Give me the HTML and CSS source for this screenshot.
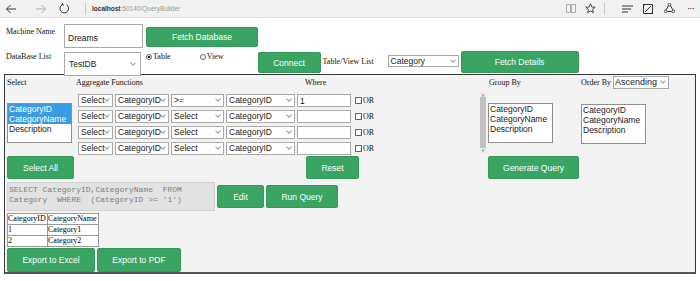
FILE: index.html
```html
<!DOCTYPE html>
<html lang="en">
<head>
    <meta charset="UTF-8">
    <title>QueryBuilder</title>
    <link rel="stylesheet" href="styles.css">
</head>
<body>
    <!-- browser toolbar -->
    <div class="browser">
        <div class="nav">
            <svg class="ico back" width="12" height="10" viewBox="0 0 12 10"><path d="M11 5H1.5M5.5 1L1.5 5l4 4" fill="none" stroke="#333" stroke-width="1"/></svg>
            <svg class="ico fwd" width="12" height="10" viewBox="0 0 12 10"><path d="M1 5h9.5M6.5 1l4 4-4 4" fill="none" stroke="#aaa" stroke-width="1"/></svg>
            <svg class="ico refresh" width="11" height="11" viewBox="0 0 11 11"><path d="M7.5 1.8A4.3 4.3 0 1 1 3.3 1.7" fill="none" stroke="#333" stroke-width="1"/><path d="M3.3 1.7L3.6 0M3.3 1.7L5 2.2" fill="none" stroke="#333" stroke-width="1"/></svg>
            <span class="sep"></span>
            <span class="url"><b>localhost</b>:50140/QueryBuilder</span>
        </div>
        <div class="tools">
            <svg class="ico book" width="10" height="9" viewBox="0 0 10 9"><path d="M.5 .5h4v8h-4zM5.5 .5h4v8h-4z" fill="none" stroke="#aaa"/></svg>
            <svg class="ico star" width="11" height="11" viewBox="0 0 11 11"><path d="M5.5 .8l1.3 3.2 3.4.2-2.6 2.2.8 3.3-2.9-1.8-2.9 1.8.8-3.3L.8 4.2l3.4-.2z" fill="none" stroke="#333" stroke-width=".9"/></svg>
            <span class="sep"></span>
            <svg class="ico hub" width="11" height="8" viewBox="0 0 11 8"><path d="M0 1h11M0 4h9M0 7h6" stroke="#333"/></svg>
            <svg class="ico note" width="10" height="10" viewBox="0 0 10 10"><path d="M.5 .5h9v9h-9z" fill="none" stroke="#333"/><path d="M2 8L8 2" stroke="#333"/><circle cx=".8" cy=".8" r=".9" fill="#333"/><circle cx="9.2" cy="9.2" r=".9" fill="#333"/></svg>
            <svg class="ico share" width="11" height="11" viewBox="0 0 11 11"><path d="M5.5 1L9.8 8.5H1.2z" fill="none" stroke="#333" stroke-linejoin="round"/><circle cx="5.5" cy="1.6" r="1.4" fill="#f2f2f2" stroke="#333" stroke-width=".8"/><circle cx="9.3" cy="8.3" r="1.4" fill="#f2f2f2" stroke="#333" stroke-width=".8"/><circle cx="1.7" cy="8.3" r="1.4" fill="#f2f2f2" stroke="#333" stroke-width=".8"/></svg>
            <span class="more">&middot;&middot;&middot;</span>
        </div>
    </div>

    <!-- connection form -->
    <div class="top">
        <div class="row row1">
            <label class="lbl lbl-machine">Machine Name</label>
            <input class="text machine" type="text" value="Dreams">
            <button class="btn fetch-db">Fetch Database</button>
        </div>
        <div class="row row2">
            <label class="lbl lbl-db">DataBase List</label>
            <span class="sel sel-db">TestDB</span>
            <span class="radio radio-table"><span class="dot on"></span>Table</span>
            <span class="radio radio-view"><span class="dot"></span>View</span>
            <button class="btn connect">Connect</button>
            <label class="lbl lbl-table">Table/View List</label>
            <span class="sel sel-table">Category</span>
            <button class="btn fetch-details">Fetch Details</button>
        </div>
    </div>

    <!-- query builder -->
    <div class="panel">
        <div class="qb-top">
            <div class="col col-select">
                <div class="head">Select</div>
                <div class="listbox">
                    <div class="opt picked">CategoryID</div>
                    <div class="opt picked">CategoryName</div>
                    <div class="opt">Description</div>
                </div>
            </div>

            <div class="col col-agg">
                <div class="head agg-head">
                    <span>Aggregate Functions</span>
                    <span class="where">Where</span>
                </div>
                <div class="agg-row">
                    <span class="sel s1">Select</span>
                    <span class="sel s2">CategoryID</span>
                    <span class="sel s3">&gt;=</span>
                    <span class="sel s4">CategoryID</span>
                    <input class="text cond" type="text" value="1">
                    <span class="check"></span><span class="or">OR</span>
                </div>
                <div class="agg-row">
                    <span class="sel s1">Select</span>
                    <span class="sel s2">CategoryID</span>
                    <span class="sel s3">Select</span>
                    <span class="sel s4">CategoryID</span>
                    <input class="text cond" type="text" value="">
                    <span class="check"></span><span class="or">OR</span>
                </div>
                <div class="agg-row">
                    <span class="sel s1">Select</span>
                    <span class="sel s2">CategoryID</span>
                    <span class="sel s3">Select</span>
                    <span class="sel s4">CategoryID</span>
                    <input class="text cond" type="text" value="">
                    <span class="check"></span><span class="or">OR</span>
                </div>
                <div class="agg-row">
                    <span class="sel s1">Select</span>
                    <span class="sel s2">CategoryID</span>
                    <span class="sel s3">Select</span>
                    <span class="sel s4">CategoryID</span>
                    <input class="text cond" type="text" value="">
                    <span class="check"></span><span class="or">OR</span>
                </div>
            </div>

            <div class="col col-group">
                <div class="head group-head">Group By</div>
                <div class="group-body">
                    <div class="scrollbar"><span class="arrow">&#9650;</span><span class="thumb"></span><span class="arrow">&#9660;</span></div>
                    <div class="listbox">
                        <div class="opt">CategoryID</div>
                        <div class="opt">CategoryName</div>
                        <div class="opt">Description</div>
                    </div>
                </div>
            </div>

            <div class="col col-order">
                <div class="head order-head">Order By <span class="sel sel-order">Ascending</span></div>
                <div class="listbox">
                    <div class="opt">CategoryID</div>
                    <div class="opt">CategoryName</div>
                    <div class="opt">Description</div>
                </div>
            </div>
        </div>

        <div class="btn-row">
            <button class="btn select-all">Select All</button>
            <button class="btn reset">Reset</button>
            <button class="btn generate">Generate Query</button>
        </div>

        <div class="query-row">
            <div class="query">SELECT CategoryID,CategoryName  FROM<br>Category  WHERE  (CategoryID &gt;= '1')</div>
            <button class="btn edit">Edit</button>
            <button class="btn run">Run Query</button>
        </div>

        <table class="result">
            <tr><td class="c1">CategoryID</td><td class="c2">CategoryName</td></tr>
            <tr><td>1</td><td>Category1</td></tr>
            <tr><td>2</td><td>Category2</td></tr>
        </table>

        <div class="export-row">
            <button class="btn excel">Export to Excel</button>
            <button class="btn pdf">Export to PDF</button>
        </div>
    </div>
</body>
</html>
```

FILE: styles.css
```css
body {
    margin: 0;
    font-family: "Liberation Serif", serif;
    font-size: 8px;
    color: #111;
    background: #fff;
}

/* browser bar */
.browser {
    height: 17px;
    background: #f2f2f2;
    border-bottom: 1px solid #dedede;
    display: flex;
    align-items: center;
    justify-content: space-between;
}
.nav, .tools {
    display: flex;
    align-items: center;
}
.ico { display: block; }
.back { margin-left: 5px; }
.fwd { margin-left: 18px; }
.refresh { margin-left: 12px; }
.sep {
    width: 1px;
    height: 12px;
    background: #c8c8c8;
}
.nav .sep { margin-left: 15px; }
.url {
    margin-left: 6px;
    font-family: "Liberation Sans", sans-serif;
    font-size: 6.5px;
    color: #999;
}
.url b { color: #333; font-weight: bold; }
.tools { margin-right: 6px; }
.book { margin-right: 9px; }
.star { margin-right: 8px; }
.tools .sep { margin-right: 17px; }
.hub { margin-right: 10px; }
.note { margin-right: 11px; }
.share { margin-right: 12px; }
.more {
    font-family: "Liberation Sans", sans-serif;
    font-size: 10px;
    color: #333;
    letter-spacing: -1px;
}

/* connection form */
.top { padding: 6px 0 0 6px; }
.row {
    display: flex;
    align-items: flex-start;
}
.row1 { height: 26px; }
.row2 { height: 24px; }
.lbl {
    line-height: 10px;
    white-space: nowrap;
}
.lbl-machine { width: 58px; padding-top: 3px; }
.lbl-db { width: 58px; padding-top: 2px; }
.lbl-table { width: 65px; margin-left: 2px; padding-top: 7px; }

.text {
    box-sizing: border-box;
    margin: 0;
    border: 1px solid #a9a9a9;
    background: #fff;
    font-family: "Liberation Sans", sans-serif;
    font-size: 8.5px;
    color: #111;
    padding: 0 3px;
}
.machine { width: 79px; height: 24px; padding-top: 3px; }

.sel {
    box-sizing: border-box;
    position: relative;
    display: inline-block;
    height: 13px;
    line-height: 11px;
    border: 1px solid #a9a9a9;
    background: #fff;
    font-family: "Liberation Sans", sans-serif;
    font-size: 8.5px;
    color: #222;
    padding-left: 2px;
    white-space: nowrap;
    overflow: hidden;
}
.sel::after {
    content: "";
    position: absolute;
    right: 3px;
    top: 2px;
    width: 3px;
    height: 3px;
    border-right: 1px solid #9a9a9a;
    border-bottom: 1px solid #9a9a9a;
    transform: rotate(45deg);
}
.sel-db {
    width: 77px;
    height: 24px;
    line-height: 22px;
    margin-top: 2px;
    padding-left: 4px;
}
.sel-db::after { top: 8px; right: 5px; }
.sel-table { width: 71px; height: 12px; line-height: 10px; margin-top: 5px; }
.sel-table::after { top: 2px; }

.radio {
    display: flex;
    align-items: center;
    line-height: 10px;
    font-size: 8px;
}
.dot {
    box-sizing: border-box;
    width: 6px;
    height: 6px;
    border: 1px solid #666;
    border-radius: 50%;
    margin-right: 1px;
    background: #fff;
}
.dot.on { background: radial-gradient(circle, #222 1.3px, #fff 1.6px); }
.radio-table { margin-left: 5px; padding-top: 2px; }
.radio-view { margin-left: 29px; padding-top: 2px; }

.btn {
    box-sizing: border-box;
    margin: 0;
    padding: 0;
    border: 1px solid #34995b;
    border-radius: 2px;
    background-color: #3aa563;
    color: #fff;
    font-family: "Liberation Sans", sans-serif;
    font-size: 8.5px;
    cursor: pointer;
}
.fetch-db { width: 112px; height: 20px; margin: 3px 0 0 3px; }
.connect { width: 63px; height: 21px; margin: 2px 0 0 34px; }
.fetch-details { width: 118px; height: 22px; margin: 1px 0 0 2px; }

/* query builder panel */
.panel {
    box-sizing: border-box;
    margin-left: 4px;
    width: 692px;
    height: 200px;
    border: 1px solid #3a3a3a;
    border-bottom: 2px solid #555;
    background: #f3f3f3;
}
.qb-top {
    display: flex;
    height: 80px;
}
.head {
    line-height: 10px;
    padding-top: 3px;
    white-space: nowrap;
}
.col-select { margin-left: 2px; width: 64px; }
.listbox {
    box-sizing: border-box;
    width: 65px;
    height: 40px;
    border: 1px solid #8f8f8f;
    background: #fff;
    font-family: "Liberation Sans", sans-serif;
    font-size: 8.5px;
    line-height: 10px;
    color: #222;
}
.opt { padding-left: 1px; white-space: nowrap; }
.opt.picked { background: #3a9be3; color: #fff; }
.col-select .listbox { margin-top: 15px; }

.col-agg { margin-left: 5px; width: 404px; }
.agg-head { display: flex; }
.where { margin-left: 162px; }
.agg-row {
    display: flex;
    align-items: center;
    gap: 2px;
    margin-left: 2px;
    height: 13px;
    margin-top: 3px;
}
.agg-head + .agg-row { margin-top: 6px; }
.s1 { width: 35px; }
.s2 { width: 54px; }
.s3 { width: 53px; }
.s4 { width: 69px; }
.cond { width: 54px; height: 13px; line-height: 11px; padding: 0 2px; }
.check {
    box-sizing: border-box;
    width: 7px;
    height: 7px;
    border: 1px solid #666;
    background: #fff;
    margin-left: 2px;
}
.or { margin-left: -1px; font-size: 8px; color: #111; }

.col-group { width: 101px; }
.group-head { padding-left: 9px; }
.group-body { display: flex; align-items: flex-start; margin-top: 4px; }
.scrollbar {
    width: 6px;
    height: 61px;
    background: #ececec;
    display: flex;
    flex-direction: column;
    align-items: center;
}
.arrow {
    font-size: 4px;
    line-height: 5px;
    color: #aaa;
    font-family: "DejaVu Sans", sans-serif;
}
.thumb {
    flex: 1;
    width: 6px;
    background: #c2c2c2;
}
.group-body .listbox { margin: 11px 0 0 2px; }

.order-head { padding-top: 3px; display: flex; align-items: flex-start; }
.sel-order {
    width: 56px;
    height: 13px;
    margin: -2px 0 0 2px;
    padding-left: 1px;
    font-size: 9px;
}
.col-order .listbox { margin-top: 15px; }

.btn-row {
    display: flex;
    margin-top: 1px;
}
.select-all { width: 67px; height: 23px; margin-left: 2px; }
.reset { width: 53px; height: 23px; margin-left: 232px; }
.generate { width: 91px; height: 23px; margin-left: 129px; }

.query-row {
    display: flex;
    align-items: flex-start;
    margin-top: 3px;
}
.query {
    box-sizing: border-box;
    width: 208px;
    height: 29px;
    margin-left: 2px;
    padding: 2px 0 0 1px;
    background: #e2e2e2;
    border: 1px solid #d2d2d2;
    font-family: "Liberation Mono", monospace;
    font-size: 8px;
    line-height: 10px;
    color: #808080;
    white-space: pre;
}
.edit { width: 47px; height: 23px; margin: 3px 0 0 2px; }
.run { width: 72px; height: 23px; margin: 3px 0 0 2px; }

.result {
    margin: 2px 0 0 2px;
    border-collapse: separate;
    border-spacing: 0;
    border: 1px solid #9a9a9a;
    background: #fff;
    font-size: 8px;
    color: #000;
}
.result td {
    border: 1px solid #9a9a9a;
    border-width: 0 1px 1px 0;
    height: 10px;
    line-height: 10px;
    padding: 0 1px 0 0;
    white-space: nowrap;
}
.result tr:last-child td { border-bottom: 0; }
.result td:last-child { border-right: 0; }
.result .c1 { width: 38px; }
.result .c2 { width: 49px; }

.export-row {
    display: flex;
    margin-top: 1px;
}
.excel { width: 88px; height: 24px; margin-left: 2px; }
.pdf { width: 84px; height: 24px; margin-left: 2px; }
```
